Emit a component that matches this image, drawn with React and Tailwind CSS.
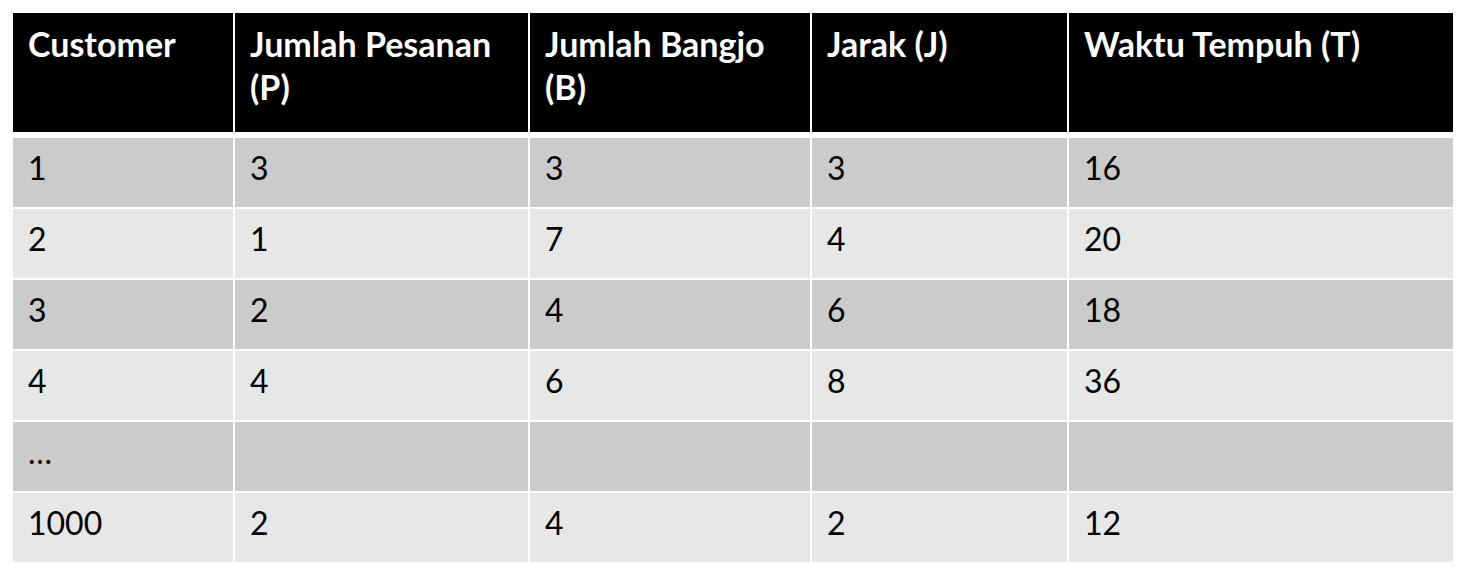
import React from "react";

const cols = "grid grid-cols-[220px_293px_280px_255px_384px] gap-x-[2px]";

const rows = [
  ["1", "3", "3", "3", "16"],
  ["2", "1", "7", "4", "20"],
  ["3", "2", "4", "6", "18"],
  ["4", "4", "6", "8", "36"],
  ["…", "", "", "", ""],
  ["1000", "2", "4", "2", "12"],
];

const App = () => {
  return (
    <div className="w-[1466px] h-[575px] bg-white pt-[13px] pl-[13px] font-['Lato',sans-serif] text-[32px] leading-[43px]">
      <div className="flex flex-col w-[1440px]">
        {/* Header */}
        <div className={cols}>
          {[["Customer"], ["Jumlah Pesanan", "(P)"], ["Jumlah Bangjo", "(B)"], ["Jarak (J)"], ["Waktu Tempuh (T)"]].map((lines, i) => (
            <div key={i} className="h-[119px] bg-black text-white font-bold text-[34px] pl-[15px] pt-[9px]">
              {lines.map((l) => (
                <div key={l} className="whitespace-nowrap">{l}</div>
              ))}
            </div>
          ))}
        </div>

        {/* Body rows */}
        <div className="flex flex-col gap-y-[2px] mt-[6px]">
          {rows.map((r, ri) => (
            <div key={ri} className={cols}>
              {r.map((c, ci) => (
                <div
                  key={ci}
                  className={`h-[69px] pl-[15px] pt-[8px] text-black whitespace-nowrap ${
                    ri % 2 === 0 ? "bg-[#cbcbcb]" : "bg-[#e7e7e7]"
                  }`}
                >
                  {c}
                </div>
              ))}
            </div>
          ))}
        </div>
      </div>
    </div>
  );
};

export default App;
